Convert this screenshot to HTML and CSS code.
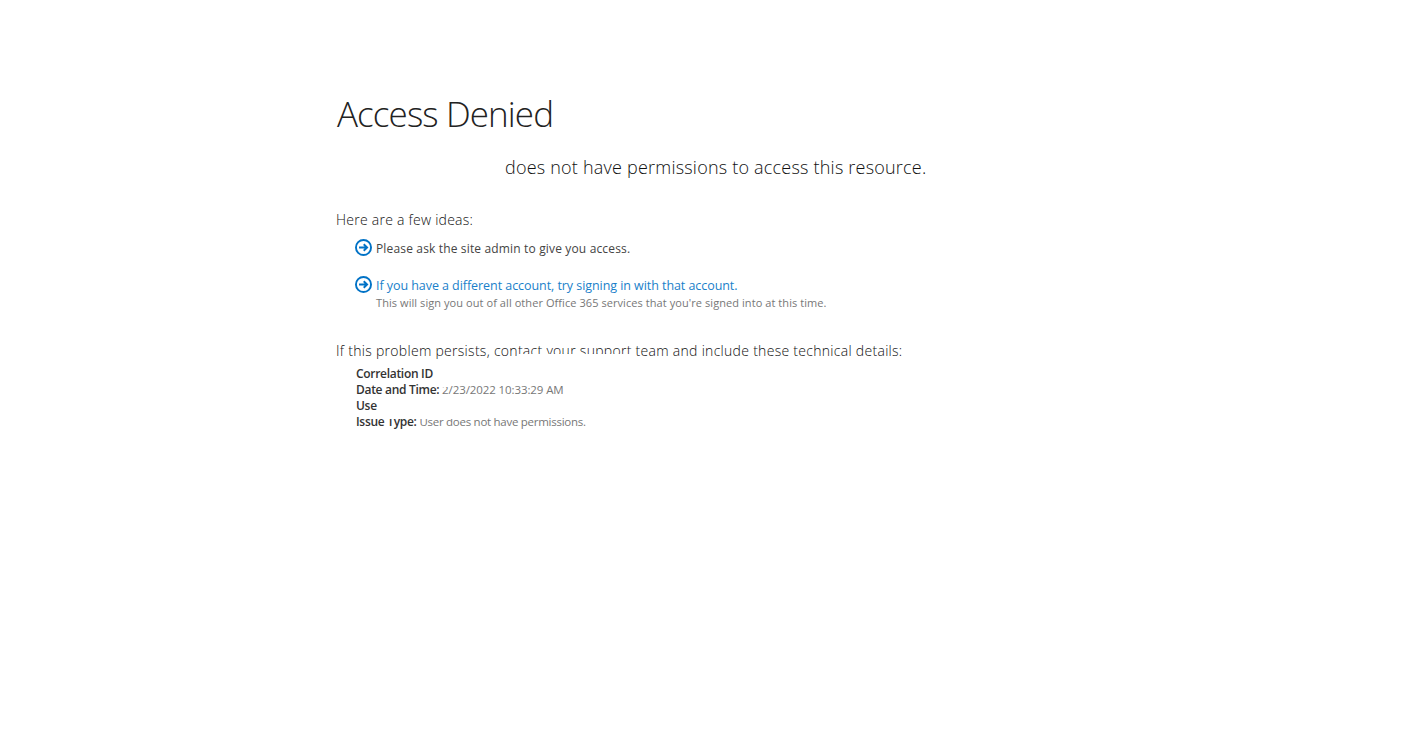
FILE: index.html
```html
<!DOCTYPE html>
<html lang="en">
<head>
<meta charset="utf-8">
<title>Access Denied</title>
<link rel="stylesheet" href="styles.css">
</head>
<body>
<main class="page">
  <h1 class="title">Access Denied</h1>
  <p class="subtitle">does not have permissions to access this resource.</p>
  <p class="lead">Here are a few ideas:</p>
  <ul class="ideas">
    <li class="idea">
      <svg class="arrow" viewBox="0 0 16 16" aria-hidden="true"><circle cx="8" cy="8" r="7.1"/><path d="M3.8 8h7.6M8.2 4.9 11.4 8l-3.2 3.1"/></svg>
      <div class="idea-text">Please ask the site admin to give you access.</div>
    </li>
    <li class="idea">
      <svg class="arrow" viewBox="0 0 16 16" aria-hidden="true"><circle cx="8" cy="8" r="7.1"/><path d="M3.8 8h7.6M8.2 4.9 11.4 8l-3.2 3.1"/></svg>
      <div class="idea-text">
        <a class="idea-link" href="#">If you have a different account, try signing in with that account.</a>
        <div class="idea-note">This will sign you out of all other Office 365 services that you're signed into at this time.</div>
      </div>
    </li>
  </ul>
  <div class="persist">
    <p class="lead lead-tight">If this problem persists, contact your support team and include these technical details:</p>
    <span class="mask mask-persist"></span>
  </div>
  <div class="details">
    <div class="detail"><b>Correlation ID</b></div>
    <div class="detail"><b>Date and Time:</b> <span class="value value-date">2/23/2022 10:33:29 AM</span></div>
    <div class="detail"><b>Use</b></div>
    <div class="detail"><b>Issue Type:</b> <span class="value">User does not have permissions.</span></div>
    <span class="mask mask-date"></span>
    <span class="mask mask-issue"></span>
  </div>
</main>
</body>
</html>
```
FILE: styles.css
```css
* { box-sizing: border-box; }
html, body { margin: 0; background: #fff; }
body { font-family: "Open Sans", "Liberation Sans", sans-serif; color: #333; height: 732px; overflow: hidden; }
.page { padding: 91px 0 0 336px; }
.title { margin: 0 0 0 1px; font-size: 35px; line-height: 46px; font-weight: 300; color: #222; letter-spacing: -0.9px; }
.subtitle { margin: 17px 0 0 169px; font-size: 18px; line-height: 26px; font-weight: 300; color: #111; letter-spacing: 0.21px; }
.lead { margin: 30px 0 0; font-size: 14px; line-height: 20px; font-weight: 300; color: #111; letter-spacing: 0.25px; }
.lead-tight { margin: 0; letter-spacing: 0.29px; }
.ideas { list-style: none; margin: 8px 0 0 19px; padding: 0; }
.idea { display: flex; align-items: flex-start; gap: 4px; margin-bottom: 18px; }
.idea + .idea { margin-top: -1px; }
.arrow { width: 17px; height: 17px; flex: none; margin-top: 1px; fill: none; stroke: #0072c6; stroke-width: 1.8; }
.idea-text { font-size: 12px; line-height: 18px; color: #444; letter-spacing: 0.155px; padding-top: 2px; }
.idea-link { display: block; color: #1a7fca; text-decoration: none; font-size: 12.5px; letter-spacing: -0.06px; }
.idea-note { font-size: 11px; line-height: 16px; color: #777; letter-spacing: 0.07px; }
.persist { position: relative; margin-top: 30px; }
.details { position: relative; margin: 5px 0 0 20px; font-size: 12px; line-height: 16px; color: #333; letter-spacing: -0.3px; }
.detail b { font-weight: 600; }
.value { color: #777; font-size: 11.5px; letter-spacing: -0.27px; }
.value-date { letter-spacing: -0.1px; }
.mask { position: absolute; background: #fff; }
.mask-persist { left: 181px; top: 13px; width: 116px; height: 9px; }
.mask-date { left: 86px; top: 16px; width: 7px; height: 5px; }
.mask-issue { left: 28px; top: 48px; width: 100px; height: 5px; }
```
